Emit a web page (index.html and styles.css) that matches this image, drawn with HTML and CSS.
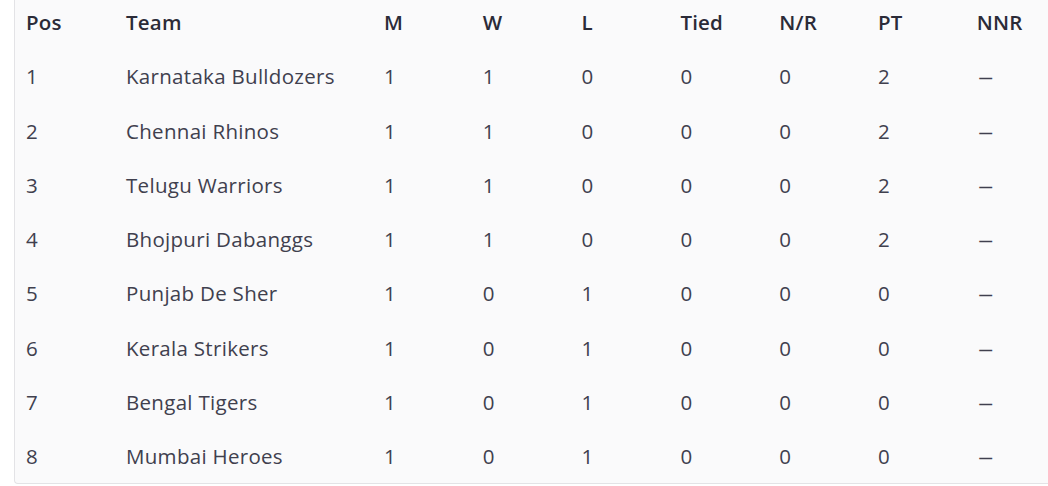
FILE: index.html
```html
<!DOCTYPE html>
<html>
<head>
<meta charset="utf-8">
<link rel="stylesheet" href="styles.css">
</head>
<body>
<div class="card">
  <div class="row head">
    <div>Pos</div><div>Team</div><div>M</div><div>W</div><div>L</div><div>Tied</div><div>N/R</div><div>PT</div><div>NNR</div>
  </div>
  <div class="row"><div>1</div><div>Karnataka Bulldozers</div><div>1</div><div>1</div><div>0</div><div>0</div><div>0</div><div>2</div><div><span class="dash">–</span></div></div>
  <div class="row"><div>2</div><div>Chennai Rhinos</div><div>1</div><div>1</div><div>0</div><div>0</div><div>0</div><div>2</div><div><span class="dash">–</span></div></div>
  <div class="row"><div>3</div><div>Telugu Warriors</div><div>1</div><div>1</div><div>0</div><div>0</div><div>0</div><div>2</div><div><span class="dash">–</span></div></div>
  <div class="row"><div>4</div><div>Bhojpuri Dabanggs</div><div>1</div><div>1</div><div>0</div><div>0</div><div>0</div><div>2</div><div><span class="dash">–</span></div></div>
  <div class="row"><div>5</div><div>Punjab De Sher</div><div>1</div><div>0</div><div>1</div><div>0</div><div>0</div><div>0</div><div><span class="dash">–</span></div></div>
  <div class="row"><div>6</div><div>Kerala Strikers</div><div>1</div><div>0</div><div>1</div><div>0</div><div>0</div><div>0</div><div><span class="dash">–</span></div></div>
  <div class="row"><div>7</div><div>Bengal Tigers</div><div>1</div><div>0</div><div>1</div><div>0</div><div>0</div><div>0</div><div><span class="dash">–</span></div></div>
  <div class="row"><div>8</div><div>Mumbai Heroes</div><div>1</div><div>0</div><div>1</div><div>0</div><div>0</div><div>0</div><div><span class="dash">–</span></div></div>
</div>
</body>
</html>
```
FILE: styles.css
```css
html, body {
  margin: 0;
  padding: 0;
  background: #ffffff;
  overflow: hidden;
}
body {
  font-family: "Open Sans", "Noto Sans", sans-serif;
  width: 1048px;
  height: 486px;
}
.card {
  margin: -5px 0 0 14px;
  width: 1100px;
  background: #fafafb;
  border-left: 1px solid #e3e3e6;
  border-bottom: 1px solid #e3e3e6;
  border-radius: 0 0 0 4px;
  padding-left: 11px;
}
.row {
  display: grid;
  grid-template-columns: 100px 258px repeat(7, 98.8px);
  height: 54.25px;
  align-items: center;
  font-size: 20.5px;
  letter-spacing: 0.3px;
  font-weight: 400;
  color: #40404e;
}
.row.head {
  font-weight: 600;
  letter-spacing: 0.2px;
  color: #2b2b38;
}
.dash {
  display: inline-block;
  transform: scaleX(1.5);
  transform-origin: left center;
  margin-left: 1px;
}
```
